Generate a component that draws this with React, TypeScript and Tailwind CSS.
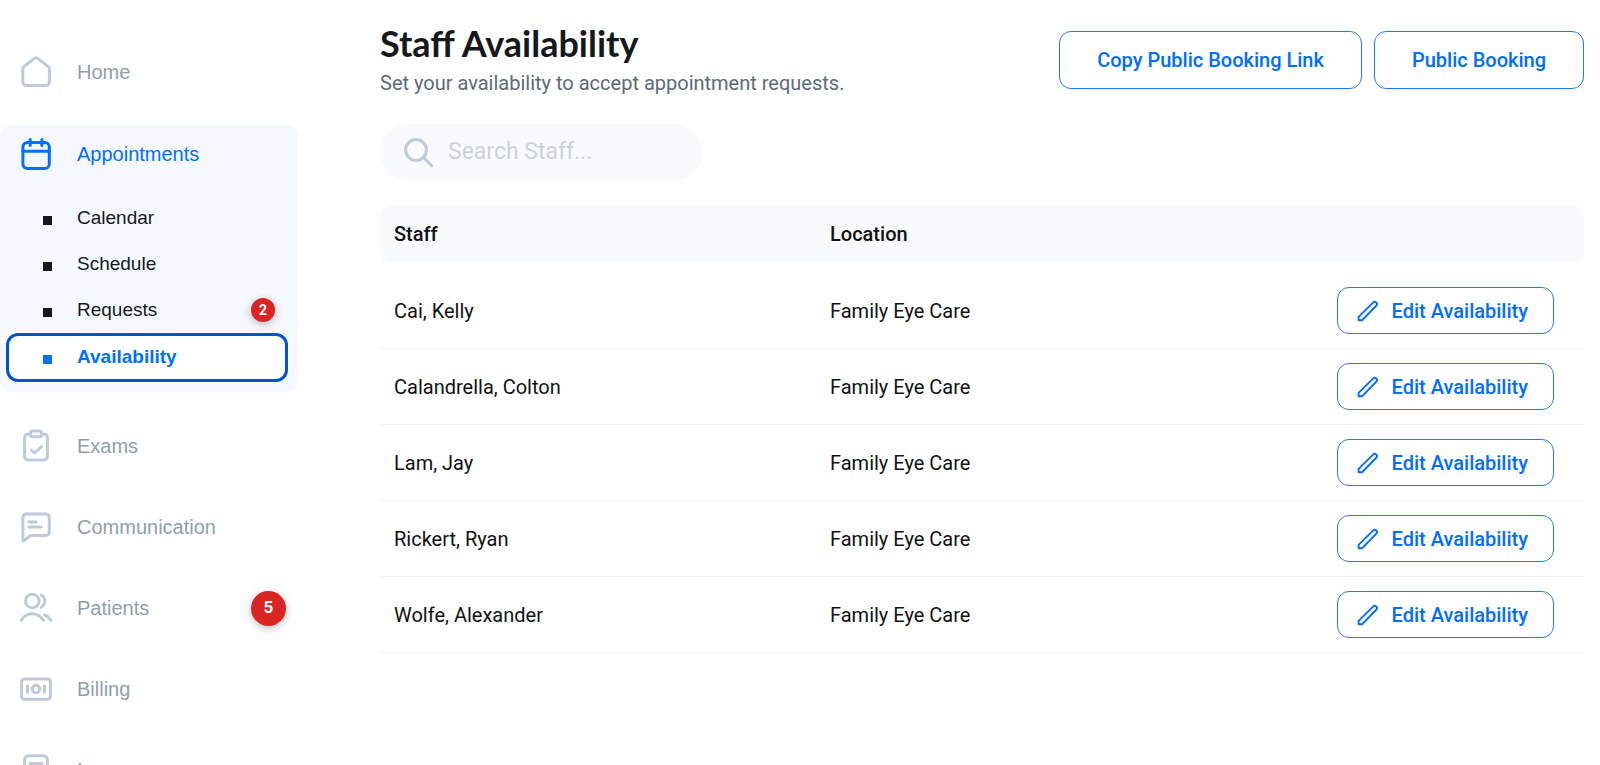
import type { ReactNode } from "react";

const Icon = ({ children }: { children: ReactNode }) => (
  <svg
    viewBox="0 0 36 36"
    className="size-9 shrink-0"
    fill="none"
    stroke="currentColor"
    strokeWidth="3"
    strokeLinecap="round"
    strokeLinejoin="round"
    aria-hidden="true"
  >
    {children}
  </svg>
);

const HomeIcon = () => (
  <Icon>
    <path d="M16.9 4.1 6.2 12.2a3.6 3.6 0 0 0-1.4 2.9V28a3.6 3.6 0 0 0 3.6 3.6h19.4a3.6 3.6 0 0 0 3.6-3.6V15.1a3.6 3.6 0 0 0-1.4-2.9L19.1 4.1a1.8 1.8 0 0 0-2.2 0Z" />
  </Icon>
);

const CalendarIcon = () => (
  <Icon>
    <rect x="4.9" y="6.6" width="26.4" height="25.8" rx="4.5" />
    <path d="M4.9 15.2h26.4M12.2 3.6v6M23.9 3.6v6" />
  </Icon>
);

const ExamsIcon = () => (
  <Icon>
    <path d="M12.6 6H10.2A3.6 3.6 0 0 0 6.6 9.6V28.4A3.6 3.6 0 0 0 10.2 32H25.8A3.6 3.6 0 0 0 29.4 28.4V9.6A3.6 3.6 0 0 0 25.8 6H23.4" />
    <rect x="12.5" y="3" width="11" height="5.8" rx="1.8" />
    <path d="m13.5 22 3 3 7-6.3" />
  </Icon>
);

const ChatIcon = () => (
  <Icon>
    <path d="M8.4 5h19.4a3.5 3.5 0 0 1 3.5 3.5v14.4a3.5 3.5 0 0 1-3.5 3.5H13.6a3 3 0 0 0-2 .8L6 31.6c-.4.3-1.1 0-1.1-.6V8.5A3.5 3.5 0 0 1 8.4 5Z" />
    <path d="M10.8 13h7.4M10.8 18h12.4" />
  </Icon>
);

const PatientsIcon = () => (
  <Icon>
    <circle cx="14.3" cy="11" r="6.8" />
    <path d="M23.3 5a7 7 0 0 1 0 12.2" />
    <path d="M3.2 30.3c2.6-4.2 6.4-6.6 11.1-6.6s8.5 2.4 11.1 6.6" />
    <path d="M26.6 24.7c2.6 1.3 4.7 3.1 6.3 5.6" />
  </Icon>
);

const BillingIcon = () => (
  <Icon>
    <rect x="3.6" y="8" width="28.8" height="20.2" rx="2.6" />
    <circle cx="18" cy="18" r="3.8" />
    <path d="M9.5 14.8v6.4M26.5 14.8v6.4" />
  </Icon>
);

const DocumentIcon = () => (
  <Icon>
    <rect x="6.6" y="3.7" width="22.8" height="29" rx="4" />
    <path d="M12 11.5h12M12 18h12M12 24.5h7" />
  </Icon>
);

const PencilIcon = () => (
  <svg viewBox="0 0 24 24" className="size-6" fill="none" stroke="currentColor" strokeWidth="1.9" strokeLinejoin="round" aria-hidden="true">
    <path d="M2.6 21.3v-3.4L17.3 3.4a2 2 0 0 1 2.8 0l.3.3a2 2 0 0 1 0 2.800L6 21.300Z" />
  </svg>
);

const NavItem = ({ icon, label, badge, active }: { icon: ReactNode; label: string; badge?: number; active?: boolean }) => (
  <a href="#" className={`flex h-9 items-center pl-[18px] pr-3 ${active ? "text-[#0070ff]" : "text-[#c0cada]"}`}>
    {icon}
    <span className={`ml-[23px] ${active ? "" : "text-[#919eab]"}`}>{label}</span>
    {badge && (
      <span className="ml-auto flex size-[35px] items-center justify-center rounded-full bg-[#db2424] font-[Roboto,sans-serif] text-[17px] font-bold text-white shadow-[0_2px_8px_rgba(0,0,0,0.25)]">
        {badge}
      </span>
    )}
  </a>
);

const subItems = [
  { label: "Calendar" },
  { label: "Schedule" },
  { label: "Requests", badge: 2 },
  { label: "Availability", active: true },
];

const staff = ["Cai, Kelly", "Calandrella, Colton", "Lam, Jay", "Rickert, Ryan", "Wolfe, Alexander"];

const Sidebar = () => (
  <nav className="flex w-[298px] shrink-0 flex-col pt-[54px] font-['Liberation_Sans',Arial,sans-serif] text-xl">
    <NavItem icon={<HomeIcon />} label="Home" />

    <div className="mt-[35px] rounded-xl bg-[#f5f8ff] pt-[11px] pb-[10px]">
      <NavItem icon={<CalendarIcon />} label="Appointments" active />
      <ul className="mt-[23px] text-[19px]">
        {subItems.map(({ label, badge, active }) => (
          <li key={label}>
            <a
              href="#"
              className={`mr-[10px] ml-[6px] flex items-center rounded-xl border-3 pr-[10px] pl-[34px] ${
                active ? "h-[49px] border-[#0055cc] bg-white font-bold text-[#0070ff] ring-1 ring-white" : "h-[46px] border-transparent text-[#16191c]"
              }`}
            >
              <span className="mt-1 size-[9px] bg-current" />
              <span className="ml-[25px]">{label}</span>
              {badge && (
                <span className="ml-auto flex size-6 items-center justify-center rounded-full bg-[#db2424] font-[Roboto,sans-serif] text-sm font-bold text-white shadow-[0_2px_8px_rgba(0,0,0,0.25)]">
                  {badge}
                </span>
              )}
            </a>
          </li>
        ))}
      </ul>
    </div>

    <div className="mt-[36px] flex flex-col gap-[45px]">
      <NavItem icon={<ExamsIcon />} label="Exams" />
      <NavItem icon={<ChatIcon />} label="Communication" />
      <NavItem icon={<PatientsIcon />} label="Patients" badge={5} />
      <NavItem icon={<BillingIcon />} label="Billing" />
      <NavItem icon={<DocumentIcon />} label="Insurance" />
    </div>
  </nav>
);

const App = () => (
  <div className="flex h-screen overflow-hidden bg-white font-[Roboto,sans-serif] text-xl text-[#0f1214]">
    <Sidebar />

    <main className="ml-[82px] min-w-0 flex-1 pr-4">
      <header className="flex items-start justify-between pt-[23px]">
        <div>
          <h1 className="font-[Lato,sans-serif] text-4xl font-bold text-[#15191c]">Staff Availability</h1>
          <p className="mt-[6px] text-[#5b6b79]">Set your availability to accept appointment requests.</p>
        </div>
        <div className="mt-2 flex gap-3 font-medium text-[#006dff]">
          <button className="h-[58px] rounded-xl border border-[#1f78ff] px-[37px]">Copy Public Booking Link</button>
          <button className="h-[58px] rounded-xl border border-[#1f78ff] px-[37px]">Public Booking</button>
        </div>
      </header>

      <label className="mt-[27px] flex h-[57px] w-[322px] items-center rounded-full bg-[#f9fafc] pl-6">
        <svg viewBox="0 0 30 30" className="size-[30px] shrink-0 text-[#c0cada]" fill="none" stroke="currentColor" strokeWidth="3" strokeLinecap="round" aria-hidden="true">
          <circle cx="12" cy="12" r="10.4" />
          <path d="m19.8 19.8 8 8" />
        </svg>
        <input
          type="text"
          aria-label="Search staff"
          placeholder="Search Staff..."
          className="ml-[14px] w-full min-w-0 bg-transparent pr-4 text-[23px] outline-none placeholder:text-[#cbd2da]"
        />
      </label>

      <table className="mt-6 w-full table-fixed border-separate border-spacing-0 text-left">
        <thead>
          <tr className="h-[58px]">
            <th className="w-[436px] rounded-l-xl bg-[#f9fafc] px-[14px] font-medium">Staff</th>
            <th className="bg-[#f9fafc] px-[14px] font-medium">Location</th>
            <th className="w-[280px] rounded-r-xl bg-[#f9fafc]" aria-label="Actions" />
          </tr>
        </thead>
        <tbody className="before:block before:h-[10px] before:content-['']">
          {staff.map((name) => (
            <tr key={name} className="h-[76px]">
              <td className="border-b border-[#f3f4f6] px-[14px]">{name}</td>
              <td className="border-b border-[#f3f4f6] px-[14px]">Family Eye Care</td>
              <td className="border-b border-[#f3f4f6] pr-[30px]">
                <button className="ml-auto flex h-[47px] items-center gap-3 rounded-xl border border-[#1f78ff] pr-[25px] pl-[18px] font-medium text-[#006dff]">
                  <PencilIcon />
                  Edit Availability
                </button>
              </td>
            </tr>
          ))}
        </tbody>
      </table>
    </main>
  </div>
);

export default App;
